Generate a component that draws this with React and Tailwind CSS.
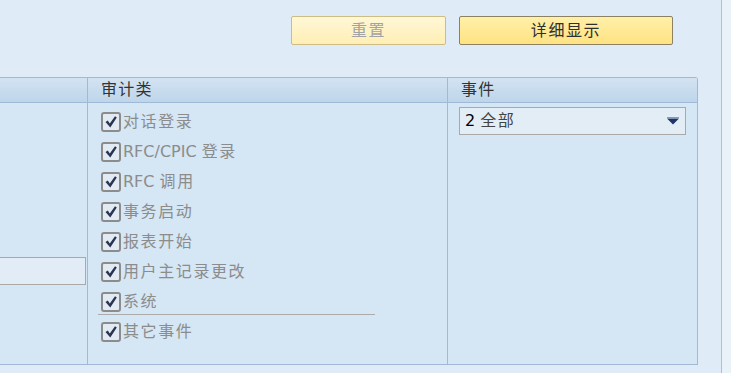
import React from "react";

const font = { fontFamily: '"DejaVu Sans", "Noto Sans CJK SC", sans-serif' };

const auditItems = [
	["", "对话登录"],
	["RFC/CPIC ", "登录"],
	["RFC ", "调用"],
	["", "事务启动"],
	["", "报表开始"],
	["", "用户主记录更改"],
	["", "系统"],
	["", "其它事件"],
];

function CheckBox() {
	return (
		<div className="flex h-[20px] w-[20px] flex-shrink-0 items-center justify-center rounded-[3px] border-2 border-[#8c8c8c] bg-[#e2ebf4]">
			<svg width="14" height="14" viewBox="0 0 14 14">
				<path d="M1.5 7 L3.8 5.6 L5.8 8.6 L11 1.2 L12.8 2.4 L6.3 12.6 Z" fill="#2b3450" />
			</svg>
		</div>
	);
}

function AuditRow({ latin, cjk, className }) {
	return (
		<div className={"flex h-[20px] items-center gap-[2px] " + className}>
			<CheckBox />
			<span className="whitespace-pre text-[16px] leading-none text-[#8c8c8c]">
				{latin}
				<span className="tracking-[1.6px]">{cjk}</span>
			</span>
		</div>
	);
}

function App() {
	return (
		<div className="flex h-[373px] w-[731px] overflow-hidden bg-[#e9f1f9]" style={font}>
			<div className="flex h-full w-[722px] flex-col border-r border-[#a9c1dc] bg-[#dfebf6]">
				<div className="flex justify-end gap-[13px] pr-[48px] pt-[16px]">
					<button className="flex h-[29px] w-[155px] items-center justify-center rounded-[2px] border border-[#cdbd84] bg-gradient-to-b from-[#fff7d6] to-[#ffefb5] text-[16px] tracking-[1.6px] text-[#a3a3a3]">
						重置
					</button>
					<button className="flex h-[29px] w-[214px] items-center justify-center rounded-[2px] border border-[#8c8160] bg-gradient-to-b from-[#fff0a8] to-[#ffe382] text-[16px] tracking-[1.6px] text-[#2f2f2f]">
						详细显示
					</button>
				</div>

				<div className="mt-[32px] w-[698px] rounded-tr-[3px] border-r border-t border-[#9fb9d6] bg-[#d5e6f4]">
					<div className="grid h-[25px] grid-cols-[88px_360px_1fr] border-b border-[#9fb9d6] bg-gradient-to-b from-[#d3e3f2] to-[#bed5ea] text-[16px] leading-[24px] tracking-[1.2px] text-[#333]">
						<div className="border-r border-[#9fb9d6]" />
						<div className="border-r border-[#9fb9d6] pl-[13px]">审计类</div>
						<div className="pl-[13px]">事件</div>
					</div>

					<div className="grid h-[262px] grid-cols-[88px_360px_1fr] border-b border-[#9fb9d6]">
						<div className="border-r border-[#9fb9d6] pt-[154px]">
							<div className="h-[28px] w-[86px] border border-l-0 border-[#a9a9a9] bg-[#e2ecf6]" />
						</div>

						<div className="border-r border-[#9fb9d6] pl-[13px] pt-[9px]">
							{auditItems.slice(0, 6).map(([latin, cjk]) => (
								<AuditRow key={cjk} latin={latin} cjk={cjk} className="mb-[10px]" />
							))}
							<AuditRow latin="" cjk={auditItems[6][1]} className="mb-[2px]" />
							<div className="mb-[7px] ml-[-3px] h-px w-[277px] bg-[#ababab]" />
							<AuditRow latin="" cjk={auditItems[7][1]} />
						</div>

						<div className="pl-[11px] pt-[4px]">
							<div className="flex h-[28px] w-[227px] items-center justify-between border border-[#a9a9a9] bg-[#e3edf6] pl-[5px] pr-[6px] text-[16px]">
								<span className="whitespace-pre">
									<span className="text-black">2 </span>
									<span className="tracking-[1.6px] text-[#444]">全部</span>
								</span>
								<svg width="12" height="8" viewBox="0 0 12 8">
									<rect x="0" y="0" width="12" height="1" fill="#8a9ab8" />
									<path d="M0 1.5 H12 L6 7.5 Z" fill="#1f356a" />
								</svg>
							</div>
						</div>
					</div>
				</div>
			</div>
		</div>
	);
}

export default App;
